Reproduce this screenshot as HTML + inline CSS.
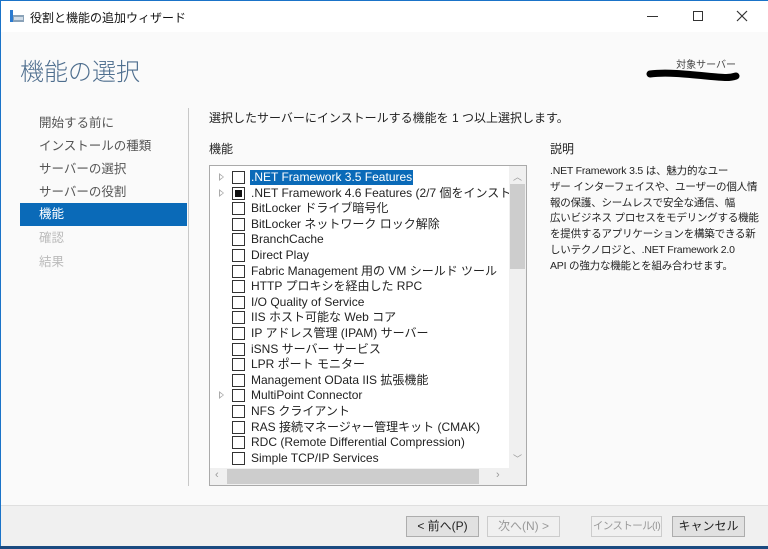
<!DOCTYPE html>
<html><head><meta charset="utf-8"><style>
*{margin:0;padding:0;box-sizing:border-box}
body{width:768px;height:549px;overflow:hidden;background:#fafafa;font-family:"Liberation Sans","Noto Sans CJK JP",sans-serif;font-size:12px;color:#222;position:relative}
.a{position:absolute;white-space:nowrap}
.nav{position:absolute;left:20px;width:167px;height:23px;line-height:23px;padding-left:19px;color:#555;font-size:12.5px}
.row{position:absolute;left:0;height:15.6px;line-height:15px;font-size:12px;color:#222}
.cb{position:absolute;left:22px;top:1px;width:13px;height:13px;border:1px solid #333;background:#fff}
.tx{position:absolute;left:41px;top:0;white-space:nowrap}
.ar{position:absolute;left:9px;top:3px;width:0;height:0;border-left:5px solid #aaa;border-top:4px solid transparent;border-bottom:4px solid transparent}
.ar:after{content:"";position:absolute;left:-4px;top:-2px;border-left:3px solid #fff;border-top:2px solid transparent;border-bottom:2px solid transparent}
.btn{position:absolute;top:516px;height:21px;border:1px solid #adadad;background:#e1e1e1;text-align:center;line-height:19px;font-size:12px;white-space:nowrap;overflow:hidden}
</style></head><body>
<div class="a" style="left:0;top:0;width:768px;height:32px;background:#fff"></div>
<div class="a" style="left:0;top:0;width:1px;height:549px;background:#1a73c8"></div>
<div class="a" style="left:0;top:0;width:768px;height:1px;background:#1a73c8"></div>
<svg class="a" style="left:9px;top:9px" width="16" height="14"><rect x="1" y="1" width="3" height="12" fill="#2a7ad0"/><rect x="4" y="6" width="11" height="7" fill="#8aa2b8"/><rect x="5" y="8" width="9" height="3" fill="#d0dce8"/></svg>
<div class="a" style="left:30px;top:9px;font-size:12px;color:#111">役割と機能の追加ウィザード</div>
<div class="a" style="left:647px;top:16px;width:11px;height:1px;background:#333"></div>
<div class="a" style="left:693px;top:11px;width:10px;height:10px;border:1px solid #333"></div>
<svg class="a" style="left:736px;top:10px" width="12" height="12"><path d="M1 1L11 11M11 1L1 11" stroke="#333" stroke-width="1.2"/></svg>
<div class="a" style="left:20px;top:52px;font-size:24px;color:#4e6e8e;font-weight:300">機能の選択</div>
<div class="a" style="right:32px;top:56px;font-size:10px;color:#444">対象サーバー</div>
<svg class="a" style="left:646px;top:68px" width="94" height="18"><path d="M4 6C20 4 40 6 60 8S84 10 90 8" stroke="#000" stroke-width="7" stroke-linecap="round" fill="none"/></svg>
<div class="nav" style="top:112px">開始する前に</div>
<div class="nav" style="top:135px">インストールの種類</div>
<div class="nav" style="top:158px">サーバーの選択</div>
<div class="nav" style="top:181px">サーバーの役割</div>
<div class="nav" style="top:203px;background:#0a6ab8;color:#fff">機能</div>
<div class="nav" style="top:227px;color:#bbb">確認</div>
<div class="nav" style="top:251px;color:#bbb">結果</div>
<div class="a" style="left:188px;top:108px;width:1px;height:378px;background:#c8c8c8"></div>
<div class="a" style="left:209px;top:109px;font-size:12px">選択したサーバーにインストールする機能を 1 つ以上選択します。</div>
<div class="a" style="left:209px;top:140px;font-size:12px">機能</div>
<div class="a" style="left:550px;top:140px;font-size:12px">説明</div>
<div class="a" style="left:550px;top:164px;font-size:10.5px;line-height:15.8px;letter-spacing:-0.2px">.NET Framework 3.5 は、魅力的なユー<br>ザー インターフェイスや、ユーザーの個人情<br>報の保護、シームレスで安全な通信、幅<br>広いビジネス プロセスをモデリングする機能<br>を提供するアプリケーションを構築できる新<br>しいテクノロジと、.NET Framework 2.0<br>API の強力な機能とを組み合わせます。</div>
<div class="a" style="left:209px;top:165px;width:318px;height:321px;border:1px solid #aaa;background:#fff;overflow:hidden">
<div style="position:absolute;left:0;top:4px;width:299px;height:297px;overflow:hidden">
<div class="row" style="top:0"><span class="ar"></span><span class="cb"></span><span class="tx" style="background:#0a6ab8;color:#fff;padding:0 1px;left:40px">.NET Framework 3.5 Features</span></div>
<div class="row" style="top:15.6px"><span class="ar"></span><span class="cb"><span style="position:absolute;left:2px;top:2px;width:7px;height:7px;background:#111"></span></span><span class="tx">.NET Framework 4.6 Features (2/7 個をインストール済み)</span></div>
<div class="row" style="top:31.2px"><span class="cb"></span><span class="tx">BitLocker ドライブ暗号化</span></div>
<div class="row" style="top:46.8px"><span class="cb"></span><span class="tx">BitLocker ネットワーク ロック解除</span></div>
<div class="row" style="top:62.4px"><span class="cb"></span><span class="tx">BranchCache</span></div>
<div class="row" style="top:78px"><span class="cb"></span><span class="tx">Direct Play</span></div>
<div class="row" style="top:93.6px"><span class="cb"></span><span class="tx">Fabric Management 用の VM シールド ツール</span></div>
<div class="row" style="top:109.2px"><span class="cb"></span><span class="tx">HTTP プロキシを経由した RPC</span></div>
<div class="row" style="top:124.8px"><span class="cb"></span><span class="tx">I/O Quality of Service</span></div>
<div class="row" style="top:140.4px"><span class="cb"></span><span class="tx">IIS ホスト可能な Web コア</span></div>
<div class="row" style="top:156px"><span class="cb"></span><span class="tx">IP アドレス管理 (IPAM) サーバー</span></div>
<div class="row" style="top:171.6px"><span class="cb"></span><span class="tx">iSNS サーバー サービス</span></div>
<div class="row" style="top:187.2px"><span class="cb"></span><span class="tx">LPR ポート モニター</span></div>
<div class="row" style="top:202.8px"><span class="cb"></span><span class="tx">Management OData IIS 拡張機能</span></div>
<div class="row" style="top:218.4px"><span class="ar"></span><span class="cb"></span><span class="tx">MultiPoint Connector</span></div>
<div class="row" style="top:234px"><span class="cb"></span><span class="tx">NFS クライアント</span></div>
<div class="row" style="top:249.6px"><span class="cb"></span><span class="tx">RAS 接続マネージャー管理キット (CMAK)</span></div>
<div class="row" style="top:265.2px"><span class="cb"></span><span class="tx">RDC (Remote Differential Compression)</span></div>
<div class="row" style="top:280.8px"><span class="cb"></span><span class="tx">Simple TCP/IP Services</span></div>
</div>
<div style="position:absolute;left:299px;top:0;width:17px;height:302px;background:#f0f0f0"><div style="position:absolute;left:1px;top:18px;width:15px;height:85px;background:#cdcdcd"></div><div style="position:absolute;left:4px;top:4px;font-size:9px;color:#999">︿</div><div style="position:absolute;left:4px;top:286px;font-size:9px;color:#999">﹀</div></div>
<div style="position:absolute;left:0;top:302px;width:299px;height:17px;background:#f0f0f0"><div style="position:absolute;left:17px;top:1px;width:252px;height:15px;background:#cdcdcd"></div><div style="position:absolute;left:5px;top:1px;font-size:11px;color:#999">‹</div><div style="position:absolute;left:286px;top:1px;font-size:11px;color:#999">›</div></div>
<div style="position:absolute;left:299px;top:302px;width:17px;height:17px;background:#f0f0f0"></div>
</div>
<div class="a" style="left:1px;top:505px;width:767px;height:41px;background:#f0f0f0;border-top:1px solid #dfdfdf"></div>
<div class="btn" style="left:406px;width:73px">&lt; 前へ(P)</div>
<div class="btn" style="left:487px;width:73px;background:#f0f0f0;border-color:#ccc;color:#999">次へ(N) &gt;</div>
<div class="btn" style="left:591px;width:71px;background:#f0f0f0;border-color:#ccc;color:#999;font-size:10.5px;letter-spacing:-0.6px">インストール(I)</div>
<div class="btn" style="left:672px;width:73px">キャンセル</div>
<div class="a" style="left:0;top:546px;width:768px;height:3px;background:#1a4a80"></div>
</body></html>
